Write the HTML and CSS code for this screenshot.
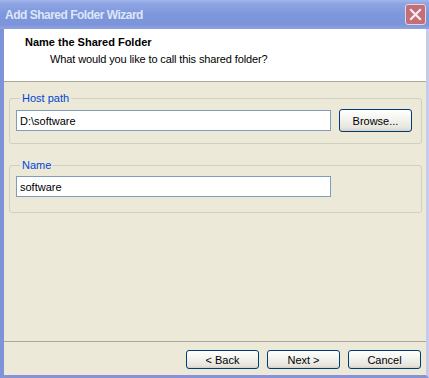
FILE: index.html
```html
<!DOCTYPE html>
<html lang="en">
<head>
    <meta charset="UTF-8">
    <title>Add Shared Folder Wizard</title>
    <link rel="stylesheet" href="styles.css">
</head>
<body>
<div class="window">
    <div class="titlebar">
        <span class="title">Add Shared Folder Wizard</span>
        <button class="close" aria-label="Close">
            <svg width="13" height="13" viewBox="0 0 13 13">
                <path d="M2 2 L11 11 M11 2 L2 11" stroke="#f6eef2" stroke-width="2.2" stroke-linecap="square"/>
            </svg>
        </button>
    </div>

    <div class="header">
        <h1>Name the Shared Folder</h1>
        <p>What would you like to call this shared folder?</p>
    </div>

    <div class="content">
        <fieldset class="group">
            <legend>Host path</legend>
            <div class="row">
                <input type="text" class="field" value="D:\software">
                <button class="btn browse">Browse...</button>
            </div>
        </fieldset>

        <fieldset class="group group-name">
            <legend>Name</legend>
            <div class="row">
                <input type="text" class="field" value="software">
            </div>
        </fieldset>
    </div>

    <div class="footer">
        <button class="btn">&lt; Back</button>
        <button class="btn">Next &gt;</button>
        <button class="btn cancel">Cancel</button>
    </div>
</div>
</body>
</html>
```

FILE: styles.css
```css
* {
    box-sizing: border-box;
    margin: 0;
    padding: 0;
}

body {
    font-family: 'Liberation Sans', Arial, sans-serif;
    font-size: 11px;
    color: #000;
    background: #ece9d8;
}

.window {
    width: 429px;
    height: 378px;
    display: flex;
    flex-direction: column;
    background: #ece9d8;
    border-left: 4px solid #8092d8;
    border-right: 3px solid #c4cce8;
    border-bottom: 3px solid #8a92d6;
}

.titlebar {
    height: 29px;
    margin-left: -4px;
    margin-right: -3px;
    display: flex;
    align-items: center;
    justify-content: space-between;
    padding: 0 3px 0 5px;
    background: linear-gradient(to bottom, #a3b6ea 0%, #8ea5e4 12%, #7d97dc 50%, #7c95da 85%, #8fa3de 100%);
}

.title {
    font-weight: bold;
    font-size: 12px;
    letter-spacing: -0.5px;
    color: #dde6f8;
}

.close {
    width: 21px;
    height: 21px;
    border: 1px solid #e6d6e4;
    border-radius: 3px;
    background: #c46e78;
    display: flex;
    align-items: center;
    justify-content: center;
}

.header {
    height: 53px;
    background: #fff;
    border-bottom: 1px solid #aca899;
    padding: 7px 0 0 21px;
}

.header h1 {
    font-size: 11px;
    font-weight: bold;
    line-height: 13px;
}

.header p {
    margin: 4px 0 0 25px;
    line-height: 13px;
    letter-spacing: -0.12px;
}

.content {
    flex: 1;
    padding: 10px 4px 0 5px;
    display: flex;
    flex-direction: column;
    gap: 15px;
}

.group {
    border: 1px solid #d0d0bf;
    border-radius: 3px;
    padding: 4px 8px 11px 6px;
}

.group-name {
    padding-bottom: 15px;
}

.group legend {
    color: #0046d5;
    padding: 0 2px;
    margin-left: 4px;
    line-height: 13px;
}

.row {
    display: flex;
    align-items: center;
    gap: 8px;
}

.field {
    width: 315px;
    height: 21px;
    border: 1px solid #7f9db9;
    padding: 0 3px;
    font-family: 'Liberation Sans', Arial, sans-serif;
    font-size: 11px;
    color: #000;
    background: #fff;
}

.btn {
    width: 73px;
    height: 19px;
    border: 1px solid #003c74;
    border-radius: 3px;
    background: linear-gradient(to bottom, #fff 0%, #f4f4f0 40%, #e6e5dd 85%, #d6d0c5 100%);
    font-family: 'Liberation Sans', Arial, sans-serif;
    font-size: 11px;
    color: #000;
}

.browse {
    height: 23px;
}

.footer {
    height: 34px;
    border-top: 1px solid #aca899;
    display: flex;
    justify-content: flex-end;
    align-items: flex-start;
    gap: 8px;
    padding: 8px 5px 0 0;
}
```
